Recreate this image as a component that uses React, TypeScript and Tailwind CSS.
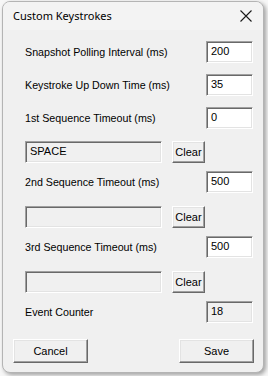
import React from "react";

const font = { fontFamily: '"Liberation Sans", Arial, sans-serif' };

function Field({ value, w = "w-[47px]", gray = false }: { value: string; w?: string; gray?: boolean }) {
  return (
    <div
      className={`${w} h-[22px] shrink-0 border border-t-[#a0a0a0] border-l-[#a0a0a0] border-b-white border-r-white shadow-[inset_1px_1px_0_#696969,inset_-1px_-1px_0_#e3e3e3] pl-[4px] pt-[3px] text-[11px] leading-[13px] text-black ${gray ? "bg-[#f0f0f0]" : "bg-white"}`}
    >
      {value}
    </div>
  );
}

function Btn({ label, w }: { label: string; w: string }) {
  return (
    <div
      className={`${w} shrink-0 flex items-center justify-center bg-[#f0f0f0] border border-t-white border-l-white border-b-[#696969] border-r-[#696969] shadow-[inset_-1px_-1px_0_#a0a0a0,inset_1px_1px_0_#e3e3e3] text-[11px] text-black`}
    >
      {label}
    </div>
  );
}

function Row({ label, value, mt, gray = false }: { label: string; value: string; mt: string; gray?: boolean }) {
  return (
    <div className={`flex items-center justify-between ${mt}`}>
      <span className="text-[10.7px] leading-[13px] text-black">{label}</span>
      <Field value={value} gray={gray} />
    </div>
  );
}

function KeyRow({ value, mt }: { value: string; mt: string }) {
  return (
    <div className={`flex items-center gap-[10px] ${mt}`}>
      <Field value={value} w="w-[137px]" gray />
      <Btn label="Clear" w="w-[33px] h-[22px]" />
    </div>
  );
}

export default function App() {
  return (
    <div className="w-[268px] h-[376px] bg-[#f7f7f7] pt-[1px] pl-[2px]" style={font}>
      <div className="w-[262px] h-[372px] rounded-[8px] border border-[#b4b4b4] overflow-hidden bg-[#f0f0f0] shadow-[2px_2px_4px_rgba(0,0,0,0.35)] flex flex-col">
        <div className="h-[28px] shrink-0 bg-[#f3f3f3] flex items-center justify-between pl-[10px] pr-[10px]">
          <span className="text-[11px] text-black" style={{ fontFamily: '"Noto Sans", "Open Sans", sans-serif' }}>
            Custom Keystrokes
          </span>
          <svg width="12" height="12" viewBox="0 0 12 12" className="mr-[1px]">
            <path d="M0.5 0.5 L11.5 11.5 M11.5 0.5 L0.5 11.5" stroke="#1a1a1a" strokeWidth="1.1" fill="none" />
          </svg>
        </div>
        <div className="flex flex-col pl-[22px] pr-[10px]">
          <Row label="Snapshot Polling Interval (ms)" value="200" mt="mt-[11px]" />
          <Row label="Keystroke Up Down Time (ms)" value="35" mt="mt-[11px]" />
          <Row label="1st Sequence Timeout (ms)" value="0" mt="mt-[11px]" />
          <KeyRow value="SPACE" mt="mt-[12px]" />
          <Row label="2nd Sequence Timeout (ms)" value="500" mt="mt-[8px]" />
          <KeyRow value="" mt="mt-[13px]" />
          <Row label="3rd Sequence Timeout (ms)" value="500" mt="mt-[8px]" />
          <KeyRow value="" mt="mt-[13px]" />
          <Row label="Event Counter" value="18" mt="mt-[8px]" gray />
        </div>
        <div className="flex justify-between pl-[10px] pr-[9px] mt-[16px]">
          <Btn label="Cancel" w="w-[75px] h-[24px]" />
          <Btn label="Save" w="w-[75px] h-[24px]" />
        </div>
      </div>
    </div>
  );
}
